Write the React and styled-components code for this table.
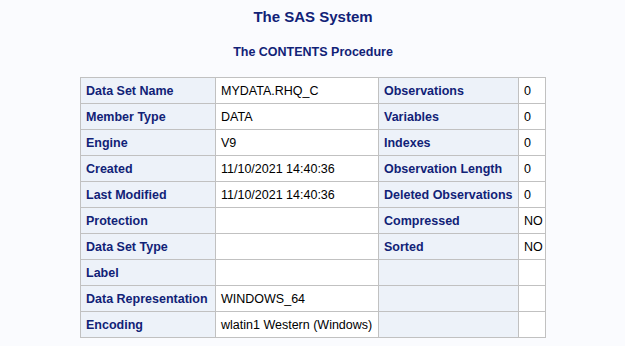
import React from "react";
import styled, { createGlobalStyle } from "styled-components";

const rows = [
  ["Data Set Name", "MYDATA.RHQ_C", "Observations", "0"],
  ["Member Type", "DATA", "Variables", "0"],
  ["Engine", "V9", "Indexes", "0"],
  ["Created", "11/10/2021 14:40:36", "Observation Length", "0"],
  ["Last Modified", "11/10/2021 14:40:36", "Deleted Observations", "0"],
  ["Protection", "", "Compressed", "NO"],
  ["Data Set Type", "", "Sorted", "NO"],
  ["Label", "", "", ""],
  ["Data Representation", "WINDOWS_64", "", ""],
  ["Encoding", "wlatin1 Western (Windows)", "", ""],
];

const GlobalStyle = createGlobalStyle`
  html, body {
    margin: 0;
    background: #fafbfe;
  }
  body {
    font-family: "Liberation Sans", Arial, sans-serif;
  }
`;

const Page = styled.div`
  display: flex;
  flex-direction: column;
  align-items: center;
  padding: 8px 0 0 1px;
`;

const Title = styled.h1`
  margin: 0;
  font-size: 15px;
  line-height: 17px;
  font-weight: bold;
  color: #112277;
`;

const Subtitle = styled.h2`
  margin: 20px 0 0;
  font-size: 12.5px;
  line-height: 14px;
  font-weight: bold;
  color: #112277;
`;

const Table = styled.div`
  margin-top: 18px;
  display: grid;
  grid-template-columns: 134px 162px 139px 26px;
  grid-auto-rows: 25px;
  gap: 1px;
  border: 1px solid #c1c1c1;
  background: #c1c1c1;
`;

const Cell = styled.div`
  display: flex;
  align-items: center;
  padding: 0 5px;
  white-space: nowrap;
  font-size: 12.5px;
  background: ${(p) => (p.$header ? "#edf2f9" : "#ffffff")};
  color: ${(p) => (p.$header ? "#112277" : "#000000")};
  font-weight: ${(p) => (p.$header ? "bold" : "normal")};
`;

export default function App() {
  return (
    <>
      <GlobalStyle />
      <Page>
        <Title>The SAS System</Title>
        <Subtitle>The CONTENTS Procedure</Subtitle>
        <Table>
          {rows.map((r, i) => (
            <React.Fragment key={i}>
              <Cell $header>{r[0]}</Cell>
              <Cell>{r[1]}</Cell>
              <Cell $header>{r[2]}</Cell>
              <Cell>{r[3]}</Cell>
            </React.Fragment>
          ))}
        </Table>
      </Page>
    </>
  );
}
